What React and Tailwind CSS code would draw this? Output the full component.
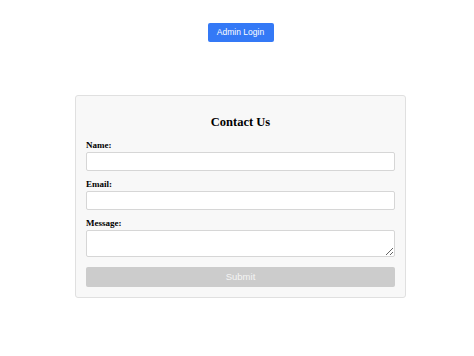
import React from 'react';

const serif = { fontFamily: '"Liberation Serif", "Times New Roman", serif' };

export default function App() {
  return (
    <div className="min-h-[356px] bg-white pl-[7px] pt-[23px]" style={{ fontFamily: '"Liberation Sans", Arial, sans-serif' }}>
      <div className="flex justify-center">
        <button className="h-[19px] w-[66px] rounded-[2px] bg-[#3479f6] text-[8.5px] text-white">Admin Login</button>
      </div>

      {/* Contact form */}
      <div className="mx-auto mt-[53px] w-[331px] rounded-[3px] border border-[#e0e0e0] bg-[#f8f8f8] px-[10px] pt-[6px] pb-[10px]" style={serif}>
        <h2 className="mt-[13px] mb-[9px] text-center text-[12.5px] leading-[15px] font-bold text-black">Contact Us</h2>

        <label className="block text-[9px] leading-[12px] font-bold text-black">Name:</label>
        <input className="mt-[1px] block h-[19px] w-full rounded-[2px] border border-[#d6d6d6] bg-white" />

        <label className="mt-[7px] block text-[9px] leading-[12px] font-bold text-black">Email:</label>
        <input className="mt-[1px] block h-[19px] w-full rounded-[2px] border border-[#d6d6d6] bg-white" />

        <label className="mt-[7px] block text-[9px] leading-[12px] font-bold text-black">Message:</label>
        <textarea className="mt-[1px] block h-[27px] w-full rounded-[2px] border border-[#d6d6d6] bg-white" />

        <button
          disabled
          className="mt-[10px] block h-[20px] w-full rounded-[2px] bg-[#cccccc] text-[9.5px] text-[#f4f4f4]"
          style={{ fontFamily: '"Liberation Sans", Arial, sans-serif' }}
        >
          Submit
        </button>
      </div>
    </div>
  );
}
